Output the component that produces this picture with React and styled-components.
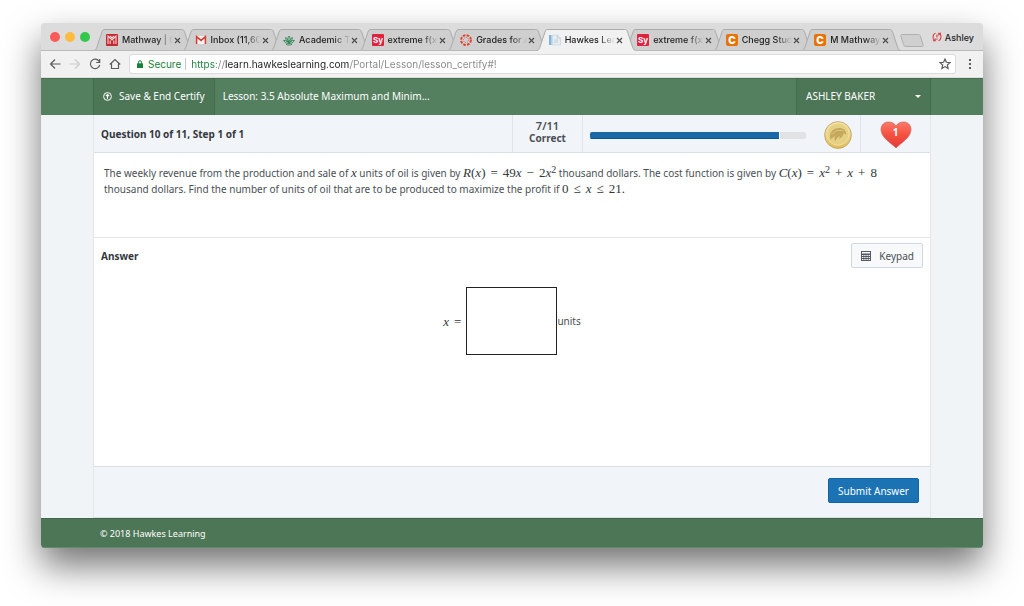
import React, { useState } from "react";
import styled, { createGlobalStyle, css } from "styled-components";

const GlobalStyle = createGlobalStyle`
  *, *::before, *::after { box-sizing: border-box; }
  body { margin: 0; background: #fff; }
  button, input { font: inherit; color: inherit; margin: 0; }
  button { border: 0; padding: 0; background: none; cursor: pointer; }
`;

const ui = `Inter, "Liberation Sans", sans-serif`;
const page = `"Noto Sans", "Open Sans", sans-serif`;
const green = "#54805f";
const darkGreen = "#4c7656";
const line = "#dcdfe1";

const Desktop = styled.div`
  display: flex;
  min-height: 100vh;
  padding: 23px 41px 58px;
`;

const BrowserWindow = styled.div`
  flex: 1;
  min-width: 0;
  display: flex;
  flex-direction: column;
  border-radius: 4px;
  overflow: hidden;
  background: #f0f4f7;
  box-shadow: 0 18px 36px rgba(0, 0, 0, 0.55);
`;

/* Browser chrome */

const TitleBar = styled.div`
  display: flex;
  align-items: flex-end;
  height: 28px;
  padding: 0 9px 0 9px;
  background: #dcdcdc;
  box-shadow: inset 0 -1px #b9b9b9;
  font-family: ${ui};
`;

const Lights = styled.div`
  display: flex;
  gap: 5px;
  align-self: center;
  width: 44px;
  flex: none;
`;

const Light = styled.button`
  width: 10px;
  height: 10px;
  border-radius: 50%;
  background: ${(p) => p.$color};
`;

const TabStrip = styled.div`
  flex: 1;
  min-width: 0;
  display: flex;
`;

const TabButton = styled.button`
  position: relative;
  flex: 1 1 0;
  min-width: 0;
  height: 22px;
  display: flex;
  align-items: center;
  padding: 0 11px 0 12px;
  z-index: ${(p) => (p.$active ? 2 : 1)};
  & + & { margin-left: -10px; }
`;

const TabShape = styled.svg`
  position: absolute;
  inset: 0;
  width: 100%;
  height: 100%;
  z-index: -1;
`;

const TabTitle = styled.span`
  flex: 1;
  min-width: 0;
  margin-left: 4px;
  overflow: hidden;
  white-space: nowrap;
  text-align: left;
  font-size: 9px;
  line-height: 14px;
  font-weight: 500;
  color: #1c1c1c;
  mask-image: linear-gradient(to right, #000 calc(100% - 16px), transparent);
`;

const Glyph = styled.svg`
  display: block;
  flex: none;
  width: ${(p) => p.$size || 12}px;
  height: ${(p) => p.$size || 12}px;
`;

const NewTab = styled.button`
  width: 26px;
  height: 13px;
  margin: 0 7px 4px -2px;
  flex: none;
  svg { display: block; }
`;

const Profile = styled.button`
  display: flex;
  align-items: center;
  gap: 3px;
  align-self: center;
  height: 22px;
  flex: none;
  font-size: 9px;
  font-weight: 500;
  color: #1c1c1c;
`;

const Toolbar = styled.div`
  display: flex;
  align-items: center;
  height: 27px;
  padding: 0 7px 2px 8px;
  gap: 8px;
  background: #f1f1f1;
  box-shadow: inset 0 -1px #dedede;
  font-family: ${ui};
`;

const AddressBar = styled.div`
  flex: 1;
  min-width: 0;
  display: flex;
  align-items: center;
  height: 20px;
  padding: 0 4px 0 6px;
  border: 1px solid #dcdcdc;
  border-radius: 3px;
  background: #fff;
  font-size: 10px;
`;

const Secure = styled.span`
  margin-left: 4px;
  padding-right: 4px;
  border-right: 1px solid #c4c4c4;
  line-height: 12px;
  color: #188038;
`;

const Url = styled.input`
  flex: 1;
  min-width: 0;
  height: 16px;
  margin-left: 5px;
  padding: 0;
  border: 0;
  outline: 0;
  color: transparent;
  background: linear-gradient(to right, #188038 25px, #858585 25px, #858585 34px, #1c1c1c 34px, #1c1c1c 159px, #858585 159px);
  background-clip: text;
`;

/* Site header and footer */

const SiteHeader = styled.header`
  display: flex;
  height: 37px;
  padding: 0 52px;
  background: ${green};
  box-shadow: inset 0 1px #47704f;
  color: #fff;
  font: 10px/16px ${page};
`;

const HeaderButton = styled.button`
  display: flex;
  align-items: center;
  gap: 7px;
  padding: 0 9px 2px;
  background: ${darkGreen};
  border: 1px solid #456b4f;
  border-width: 1px 1px 0;
  ${(p) => p.$wide && css`
    width: 135px;
    justify-content: space-between;
  `}
`;

const LessonTitle = styled.div`
  flex: 1;
  min-width: 0;
  align-self: center;
  padding: 0 0 2px 8px;
`;

const Caret = styled.span`
  border: 3px solid transparent;
  border-top-color: #fff;
  border-bottom: 0;
`;

const SiteFooter = styled.footer`
  height: 30px;
  padding: 0 59px;
  background: ${darkGreen};
  border-top: 1px solid #3f654a;
  box-shadow: inset 0 -1px #5f8c6b;
  color: #fff;
  font: 9px/30px ${page};
`;

/* Lesson */

const Lesson = styled.main`
  flex: 1;
  display: flex;
  flex-direction: column;
  margin: 0 52px;
  border: 1px solid #e4e7ea;
  border-width: 0 1px;
  background: #fff;
  color: #4a4f54;
  font: 10px/16px ${page};
`;

const StatusRow = styled.div`
  display: grid;
  grid-template-columns: 50% 70px 1fr 70px;
  height: 38px;
  background: #f1f4f8;
  border-bottom: 1px solid ${line};
`;

const Cell = styled.div`
  display: flex;
  align-items: center;
  justify-content: ${(p) => (p.$start ? "flex-start" : "center")};
  padding: 0 7px;
  & + & { border-left: 1px solid #e1e4e7; }
`;

const Heading = styled.h2`
  margin: 0;
  font-size: 10px;
  line-height: 16px;
  font-weight: 700;
  color: #33383d;
`;

const Score = styled.div`
  display: flex;
  flex-direction: column;
  text-align: center;
  line-height: 13px;
  font-weight: 600;
  font-size: 11px;
  padding-bottom: 3px;
  strong { font-size: 10px; font-weight: 700; }
`;

const Track = styled.div`
  flex: 1;
  height: 7px;
  margin: 3px 17px 0 0;
  border-radius: 2px;
  overflow: hidden;
  background: #e1e2e6;
`;

const Fill = styled.div`
  height: 100%;
  border-right: 1px solid #fff;
  background: #1c67a5;
  box-shadow: inset 0 -1px #0c5596;
`;

const Lives = styled.div`
  display: grid;
  place-items: center;
  & > * { grid-area: 1 / 1; }
  span { font-weight: 700; color: #fff; padding-bottom: 3px; }
`;

const Question = styled.p`
  margin: 0;
  min-height: 85px;
  padding: 12px 30px 12px 10px;
  border-bottom: 1px solid #e4e6e8;
`;

const Formula = styled.span`
  font: 13px/15px "Liberation Serif", serif;
  white-space: nowrap;
  color: #33373b;
  sup { font-size: 10px; line-height: 0; vertical-align: 4px; }
`;

const Op = styled.span`
  margin: 0 5px;
`;

const Answer = styled.section`
  flex: 1;
  display: flex;
  flex-direction: column;
  padding: 5px 7px;
`;

const AnswerHead = styled.div`
  display: flex;
  justify-content: space-between;
  align-items: center;
`;

const KeypadButton = styled.button`
  display: flex;
  align-items: center;
  gap: 7px;
  height: 25px;
  padding: 0 8px;
  border: 1px solid #cdd8e2;
  border-radius: 2px;
  background: #f7f9fb;
`;

const AnswerRow = styled.div`
  display: flex;
  justify-content: center;
  align-items: center;
  margin-top: 19px;
`;

const AnswerLabel = styled.label`
  display: flex;
`;

const AnswerBox = styled.input`
  width: 91px;
  height: 68px;
  padding: 0 8px;
  border: 1px solid #222;
  border-radius: 0;
  background: #fff;
  font-size: 14px;
`;

const SubmitRow = styled.div`
  display: flex;
  justify-content: flex-end;
  height: 52px;
  padding: 11px;
  border: 1px solid ${line};
  border-width: 1px 0;
  background: #f1f4f8;
`;

const SubmitButton = styled.button`
  height: 25px;
  padding: 0 9px;
  border: 1px solid #0f65a8;
  border-radius: 2px;
  background: #1b73b4;
  color: #fff;
`;

/* Icons */

const TileIcon = ({ color, label, radius = 0, size = 8 }) => (
  <Glyph viewBox="0 0 12 12" aria-hidden="true">
    <rect width="12" height="12" rx={radius} fill={color} />
    <text x="6" y={size > 8 ? 9.6 : 8.6} textAnchor="middle" fill="#fff" fontFamily="Inter, sans-serif" fontWeight={size > 8 ? 900 : 700} fontSize={size}>{label}</text>
  </Glyph>
);

const icons = {
  mathway: (
    <Glyph viewBox="0 0 12 12" aria-hidden="true">
      <rect width="12" height="12" rx="1" fill="#c4272d" />
      <path d="M2 10V2l4 4 4-4v8M4.2 10V6.5M7.8 10V6.5M4 2l2 2 2-2" fill="none" stroke="#f6dada" strokeWidth="1.1" />
    </Glyph>
  ),
  gmail: (
    <Glyph viewBox="0 0 12 12" aria-hidden="true">
      <rect x="1" y="2" width="10" height="8" rx="0.5" fill="#f2f2f2" />
      <path d="M1.6 10V2.6L6 6.4l4.4-3.8V10" fill="none" stroke="#d93a2c" strokeWidth="1.5" />
    </Glyph>
  ),
  lotus: (
    <Glyph viewBox="0 0 12 12" aria-hidden="true">
      <g fill="none" stroke="#2a8350" strokeWidth="0.9">
        <path d="M6 9C4.3 7 4.5 4 6 2c1.5 2 1.7 5 0 7Z" />
        <path d="M6 9C3.8 8 2.6 6 2.7 3.5 4.5 4.5 5.5 6.5 6 9ZM6 9c2.2-1 3.4-3 3.3-5.5C7.5 4.5 6.5 6.5 6 9Z" />
        <path d="M6 9.3C3.7 9.8 1.6 8.6.6 6.4 3 6.4 5 7.5 6 9.3Zm0 0c2.3.5 4.4-.7 5.4-2.9C9 6.4 7 7.5 6 9.3Z" />
        <path d="M3 10.4c2 .8 4 .8 6 0" />
      </g>
    </Glyph>
  ),
  symbolab: <TileIcon color="#e0223f" label="Sy" radius={1} />,
  canvas: (
    <Glyph viewBox="0 0 12 12" aria-hidden="true">
      <circle cx="6" cy="6" r="4.9" fill="none" stroke="#e2412f" strokeWidth="2" strokeDasharray="2.6 1.25" />
      <circle cx="6" cy="6" r="2.5" fill="none" stroke="#e2412f" strokeWidth="0.9" strokeDasharray="0.8 1.16" />
    </Glyph>
  ),
  hawkes: (
    <Glyph viewBox="0 0 12 12" aria-hidden="true">
      <rect x="0" y="1" width="2.5" height="10" fill="#7fb4dc" />
      <path d="M3.5 1h5l3 3v7h-8Z" fill="#e6edf3" stroke="#c6d3de" strokeWidth="0.7" />
      <path d="M8.3 1v3.2h3M5 6h4M5 8h4" fill="none" stroke="#b7c7d4" strokeWidth="0.8" />
    </Glyph>
  ),
  chegg: <TileIcon color="#eb7100" label="C" radius={2} size={10} />,
};

const TABS = [
  ["mathway", "Mathway | Calculus"],
  ["gmail", "Inbox (11,602)"],
  ["lotus", "Academic Tools"],
  ["symbolab", "extreme f(x)="],
  ["canvas", "Grades for Ashley"],
  ["hawkes", "Hawkes Learning"],
  ["symbolab", "extreme f(x)="],
  ["chegg", "Chegg Study"],
  ["chegg", "M Mathway"],
];

const Tab = ({ icon, title, active }) => (
  <TabButton $active={active} aria-current={active ? "page" : undefined}>
    <TabShape viewBox="0 0 99 22" preserveAspectRatio="none" aria-hidden="true">
      <path d="M0 22C2 21 2 20 3 18L8 3C9 1 9 .5 11 .5H88c2 0 2 .5 3 2.5l5 15c1 2 1 3 3 4Z" fill={active ? "#f1f1f1" : "#cfcfcf"} />
      <path d="M0 21.5C2 21 2 20 3 18L8 3C9 1 9 .5 11 .5H88c2 0 2 .5 3 2.5l5 15c1 2 1 3 3 3.5" fill="none" stroke="#ababab" />
      {!active && <path d="M0 21.5H99" stroke="#b9b9b9" />}
    </TabShape>
    {icons[icon]}
    <TabTitle>{title}</TabTitle>
    <Glyph $size={9} viewBox="0 0 9 9" aria-hidden="true">
      <path d="M2 2l5 5M7 2L2 7" stroke="#4a4a4a" strokeWidth="1.1" />
    </Glyph>
  </TabButton>
);

const NavIcon = ({ label, d, color = "#5c5c5c", width = 1.2 }) => (
  <button aria-label={label}>
    <Glyph viewBox="0 0 12 12" aria-hidden="true">
      <path d={d} fill="none" stroke={color} strokeWidth={width} />
    </Glyph>
  </button>
);

const Coin = () => (
  <Glyph $size={30} viewBox="0 0 30 30" aria-label="Coin" role="img">
    <defs>
      <linearGradient id="coin" x1="0" y1="0" x2="0" y2="1">
        <stop offset="0" stopColor="#f5e6a8" />
        <stop offset="1" stopColor="#e2bd55" />
      </linearGradient>
    </defs>
    <circle cx="15" cy="16" r="13.4" fill="url(#coin)" stroke="#b9a068" strokeWidth="0.8" />
    <circle cx="15" cy="15.2" r="11" fill="#e6d083" stroke="#f3e5b0" strokeWidth="0.7" />
    <path d="M7 17C7.500 11.500 12 8.500 17 9c4 .4 6.500 3 6.200 7l-2.200-2c-1 2.500-2.200 4.500-5 6l.8-3c-2 .5-3.500 2.500-4 5l-1.500-1.500c0-1.500.3-2.800 1-4L10 18.500C9 19 8 20 7.500 21Z" fill="#c4a85e" />
    <path d="M9 15.500c3-4 6.500-5 11.500-3.500" fill="none" stroke="#e6d083" strokeWidth="0.8" />
  </Glyph>
);

const Heart = () => (
  <Glyph $size={32} viewBox="0 0 32 32" aria-hidden="true">
    <defs>
      <linearGradient id="heart" x1="0" y1="0" x2="0" y2="1">
        <stop offset="0" stopColor="#ff7a6a" />
        <stop offset="0.5" stopColor="#f4503f" />
        <stop offset="1" stopColor="#e53a38" />
      </linearGradient>
    </defs>
    <path d="M16 30C12 25.500 1 20 1 11.500 1 6.500 4.500 4 8.500 4c3.500 0 6 1.500 7.500 4 1.500-2.500 4-4 7.500-4C27.500 4 31 6.500 31 11.500 31 20 20 25.500 16 30Z" fill="url(#heart)" stroke="#c9685f" strokeWidth="0.7" />
  </Glyph>
);

export default function App() {
  const [value, setValue] = useState("");
  return (
    <>
      <GlobalStyle />
      <Desktop>
        <BrowserWindow>
          <TitleBar>
            <Lights>
              <Light $color="#fc5b57" aria-label="Close" />
              <Light $color="#fdbc40" aria-label="Minimize" />
              <Light $color="#34c84a" aria-label="Zoom" />
            </Lights>
            <TabStrip>
              {TABS.map(([icon, title], i) => (
                <Tab key={i} icon={icon} title={title} active={icon === "hawkes"} />
              ))}
            </TabStrip>
            <NewTab aria-label="New tab">
              <svg width="26" height="13" viewBox="0 0 26 13" aria-hidden="true">
                <path d="M3 .5H19c1.500 0 2 .5 2.500 2l2.500 8c.5 1.500 0 2-1 2H7c-1.500 0-2-.5-2.500-2L2 2.500C1.500 1 2 .5 3 .5Z" fill="#cfcfcf" stroke="#b0b0b0" />
              </svg>
            </NewTab>
            <Profile>
              <Glyph $size={10} viewBox="0 0 10 10" aria-hidden="true">
                <path d="M3.500 1.200C.5 2 .3 7 2.500 8.500M1 8.700h2.200V6.500M6.500 8.800C9.500 8 9.700 3 7.500 1.500M9 1.300H6.800v2.200M5 2.500v3M5 6.500v1.200" fill="none" stroke="#d93a3a" strokeWidth="1.1" />
              </Glyph>
              Ashley
            </Profile>
          </TitleBar>
          <Toolbar>
            <NavIcon label="Back" d="M11.500 6H1.500M6 1.500L1.500 6 6 10.500" />
            <NavIcon label="Forward" d="M.5 6H10.500M6 1.500L10.500 6 6 10.500" color="#cbcbcb" />
            <NavIcon label="Reload" d="M10.200 3.500A4.700 4.700 0 1 0 10.700 7M10.700 1v3.500H7.200" />
            <NavIcon label="Home" d="M.8 6.500L6 1.500l5.200 5M2.500 5.500V10.500h7V5.500" />
            <AddressBar>
              <Glyph $size={8} viewBox="0 0 8 8" aria-hidden="true">
                <rect x="1" y="3.2" width="6" height="4.8" rx="0.5" fill="#188038" />
                <path d="M2.500 3.500V2.200a1.500 1.500 0 0 1 3 0v1.300" fill="none" stroke="#188038" />
              </Glyph>
              <Secure>Secure</Secure>
              <Url aria-label="Address" defaultValue="https://learn.hawkeslearning.com/Portal/Lesson/lesson_certify#!" />
              <NavIcon label="Bookmark" d="M6 1l1.400 3.300 3.600.3-2.700 2.400.8 3.500L6 8.600 2.900 10.500l.8-3.500L1 4.600l3.600-.3Z" />
            </AddressBar>
            <NavIcon label="Menu" d="M6 1v2M6 5v2M6 9v2" width={2} />
          </Toolbar>
          <SiteHeader>
            <HeaderButton>
              <Glyph $size={9} viewBox="0 0 9 9" aria-hidden="true">
                <path d="M4.500 7V2.500M2.800 4.200l1.700-1.700 1.700 1.700" fill="none" stroke="#fff" strokeWidth="1.1" />
                <circle cx="4.5" cy="4.5" r="3.9" fill="none" stroke="#fff" strokeWidth="1" />
              </Glyph>
              Save &amp; End Certify
            </HeaderButton>
            <LessonTitle>Lesson: 3.5 Absolute Maximum and Minim...</LessonTitle>
            <HeaderButton $wide aria-haspopup="menu">
              ASHLEY BAKER
              <Caret />
            </HeaderButton>
          </SiteHeader>
          <Lesson>
            <StatusRow>
              <Cell $start><Heading>Question 10 of 11, Step 1 of 1</Heading></Cell>
              <Cell><Score><span>7/11</span><strong>Correct</strong></Score></Cell>
              <Cell>
                <Track role="progressbar" aria-label="Progress" aria-valuenow={88} aria-valuemin={0} aria-valuemax={100}>
                  <Fill style={{ width: "88%" }} />
                </Track>
                <Coin />
              </Cell>
              <Cell><Lives><Heart /><span>1</span></Lives></Cell>
            </StatusRow>
            <Question>
              The weekly revenue from the production and sale of <Formula><i>x</i></Formula> units of oil is given by{" "}
              <Formula><i>R</i>(<i>x</i>)<Op>=</Op>49<i>x</i><Op>−</Op>2<i>x</i><sup>2</sup></Formula> thousand dollars. The cost
              function is given by <Formula><i>C</i>(<i>x</i>)<Op>=</Op><i>x</i><sup>2</sup><Op>+</Op><i>x</i><Op>+</Op>8</Formula>{" "}
              thousand dollars. Find the number of units of oil that are to be produced to maximize the profit if{" "}
              <Formula>0<Op>≤</Op><i>x</i><Op>≤</Op>21.</Formula>
            </Question>
            <Answer>
              <AnswerHead>
                <Heading>Answer</Heading>
                <KeypadButton>
                  <Glyph viewBox="0 0 12 12" aria-hidden="true">
                    <path d="M1 1h10v10H1ZM2 2v1.500h8V2Z" fill="#555b61" fillRule="evenodd" />
                    <path d="M2 5.500h8M2 7.500h8M2 9.500h8" stroke="#f7f9fb" strokeWidth="1.2" strokeDasharray="1.4 0.8" />
                  </Glyph>
                  Keypad
                </KeypadButton>
              </AnswerHead>
              <AnswerRow>
                <AnswerLabel htmlFor="answer"><Formula><i>x</i><Op>=</Op></Formula></AnswerLabel>
                <AnswerBox id="answer" value={value} onChange={(e) => setValue(e.target.value)} />
                <span>units</span>
              </AnswerRow>
            </Answer>
            <SubmitRow>
              <SubmitButton type="submit">Submit Answer</SubmitButton>
            </SubmitRow>
          </Lesson>
          <SiteFooter>© 2018 Hawkes Learning</SiteFooter>
        </BrowserWindow>
      </Desktop>
    </>
  );
}
